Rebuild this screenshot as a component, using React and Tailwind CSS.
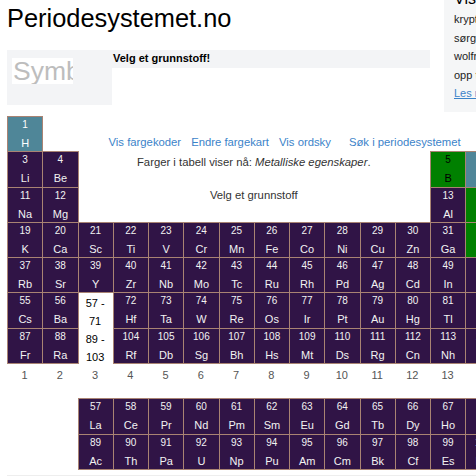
import { useState } from 'react'

// type: n = ikke-metall, g = halvmetall, m = metall
const elements = [
  [1, 'H', 1, 1, 'n'], [2, 'He', 18, 1, 'n'],
  [3, 'Li', 1, 2, 'm'], [4, 'Be', 2, 2, 'm'], [5, 'B', 13, 2, 'g'], [6, 'C', 14, 2, 'n'], [7, 'N', 15, 2, 'n'], [8, 'O', 16, 2, 'n'], [9, 'F', 17, 2, 'n'], [10, 'Ne', 18, 2, 'n'],
  [11, 'Na', 1, 3, 'm'], [12, 'Mg', 2, 3, 'm'], [13, 'Al', 13, 3, 'm'], [14, 'Si', 14, 3, 'g'], [15, 'P', 15, 3, 'n'], [16, 'S', 16, 3, 'n'], [17, 'Cl', 17, 3, 'n'], [18, 'Ar', 18, 3, 'n'],
  [19, 'K', 1, 4, 'm'], [20, 'Ca', 2, 4, 'm'], [21, 'Sc', 3, 4, 'm'], [22, 'Ti', 4, 4, 'm'], [23, 'V', 5, 4, 'm'], [24, 'Cr', 6, 4, 'm'], [25, 'Mn', 7, 4, 'm'], [26, 'Fe', 8, 4, 'm'], [27, 'Co', 9, 4, 'm'], [28, 'Ni', 10, 4, 'm'], [29, 'Cu', 11, 4, 'm'], [30, 'Zn', 12, 4, 'm'], [31, 'Ga', 13, 4, 'm'], [32, 'Ge', 14, 4, 'g'], [33, 'As', 15, 4, 'g'], [34, 'Se', 16, 4, 'n'], [35, 'Br', 17, 4, 'n'], [36, 'Kr', 18, 4, 'n'],
  [37, 'Rb', 1, 5, 'm'], [38, 'Sr', 2, 5, 'm'], [39, 'Y', 3, 5, 'm'], [40, 'Zr', 4, 5, 'm'], [41, 'Nb', 5, 5, 'm'], [42, 'Mo', 6, 5, 'm'], [43, 'Tc', 7, 5, 'm'], [44, 'Ru', 8, 5, 'm'], [45, 'Rh', 9, 5, 'm'], [46, 'Pd', 10, 5, 'm'], [47, 'Ag', 11, 5, 'm'], [48, 'Cd', 12, 5, 'm'], [49, 'In', 13, 5, 'm'], [50, 'Sn', 14, 5, 'm'], [51, 'Sb', 15, 5, 'g'], [52, 'Te', 16, 5, 'g'], [53, 'I', 17, 5, 'n'], [54, 'Xe', 18, 5, 'n'],
  [55, 'Cs', 1, 6, 'm'], [56, 'Ba', 2, 6, 'm'], [72, 'Hf', 4, 6, 'm'], [73, 'Ta', 5, 6, 'm'], [74, 'W', 6, 6, 'm'], [75, 'Re', 7, 6, 'm'], [76, 'Os', 8, 6, 'm'], [77, 'Ir', 9, 6, 'm'], [78, 'Pt', 10, 6, 'm'], [79, 'Au', 11, 6, 'm'], [80, 'Hg', 12, 6, 'm'], [81, 'Tl', 13, 6, 'm'], [82, 'Pb', 14, 6, 'm'], [83, 'Bi', 15, 6, 'm'], [84, 'Po', 16, 6, 'm'], [85, 'At', 17, 6, 'g'], [86, 'Rn', 18, 6, 'n'],
  [87, 'Fr', 1, 7, 'm'], [88, 'Ra', 2, 7, 'm'], [104, 'Rf', 4, 7, 'm'], [105, 'Db', 5, 7, 'm'], [106, 'Sg', 6, 7, 'm'], [107, 'Bh', 7, 7, 'm'], [108, 'Hs', 8, 7, 'm'], [109, 'Mt', 9, 7, 'm'], [110, 'Ds', 10, 7, 'm'], [111, 'Rg', 11, 7, 'm'], [112, 'Cn', 12, 7, 'm'], [113, 'Nh', 13, 7, 'm'], [114, 'Fl', 14, 7, 'm'], [115, 'Mc', 15, 7, 'm'], [116, 'Lv', 16, 7, 'm'], [117, 'Ts', 17, 7, 'm'], [118, 'Og', 18, 7, 'n'],
]

const lanthanides = ['La', 'Ce', 'Pr', 'Nd', 'Pm', 'Sm', 'Eu', 'Gd', 'Tb', 'Dy', 'Ho', 'Er', 'Tm', 'Yb', 'Lu']
const actinides = ['Ac', 'Th', 'Pa', 'U', 'Np', 'Pu', 'Am', 'Cm', 'Bk', 'Cf', 'Es', 'Fm', 'Md', 'No', 'Lr']

const colStart = ['', 'col-start-1', 'col-start-2', 'col-start-3', 'col-start-4', 'col-start-5', 'col-start-6', 'col-start-7', 'col-start-8', 'col-start-9', 'col-start-10', 'col-start-11', 'col-start-12', 'col-start-13', 'col-start-14', 'col-start-15', 'col-start-16', 'col-start-17', 'col-start-18']
const rowStart = ['', 'row-start-1', 'row-start-2', 'row-start-3', 'row-start-4', 'row-start-5', 'row-start-6', 'row-start-7']

const typeClass = {
  n: 'bg-[#4f8698] text-white',
  g: 'bg-[#008000] text-black',
  m: 'bg-[#301446] text-[#f2f2f2]',
}

const Cell = ({ n, s, t, col, row, onPick }) => (
  <button
    onClick={() => onPick(s)}
    className={`${typeClass[t]} ${colStart[col]} ${rowStart[row]} -mr-px -mb-px border border-[#a98373] flex flex-col items-center pt-[2px] gap-[6px] cursor-pointer`}
  >
    <span className="text-[10px] leading-[12px]">{n}</span>
    <span className="text-[11px] leading-[12px]">{s}</span>
  </button>
)

const App = () => {
  const [picked, setPicked] = useState(null)

  return (
    <div className="w-[476px] h-[476px] overflow-hidden bg-white font-['Liberation_Sans',Arial,sans-serif] text-[#222]">
      {/* Topp */}
      <div className="flex h-[112px]">
        <div className="w-[444px] shrink-0 pl-[7px]">
          <h1 className="text-[25.4px] leading-[29px] pt-[4px] text-black">Periodesystemet.no</h1>
          <div className="flex mt-[17px]">
            <div className="w-[105px] h-[55px] bg-[#f3f4f6] pl-[5px] pt-[8px]">
              <input
                placeholder="Symbol"
                className="w-[61px] h-[26px] bg-white pl-[1px] text-[26.5px] leading-[26px] outline-none placeholder:text-[#bdbdbd] font-['Liberation_Sans',Arial,sans-serif]"
              />
            </div>
            <div className="w-[318px] h-[18px] bg-[#f3f4f6] pl-[1px] pt-[2px] text-[11px] leading-[13px] font-bold text-black">
              {picked ? picked : 'Velg et grunnstoff!'}
            </div>
          </div>
        </div>
        <div className="w-[220px] shrink-0 h-[112px] bg-[#f5f6f7] pl-[10px] whitespace-nowrap">
          <h3 className="text-[16px] leading-[18px] -mt-[10px] text-black">Visste du at...</h3>
          <div className="text-[11px] leading-[18.5px] text-[#222] pt-[2px]">
            <p>krypton er en edelgass</p>
            <p>sørger for lys i lamper?</p>
            <p>wolfram har høyest smeltepunkt</p>
            <p>opp til 3422 °C?</p>
            <a href="#" className="text-[#3b83c9] underline">Les mer</a>
          </div>
        </div>
      </div>

      {/* Tabell */}
      <div className="mt-[4px] pl-[7px]">
        <div className="grid grid-cols-[repeat(18,35.25px)] grid-rows-[repeat(7,35.25px)] w-max">
          {elements.map(([n, s, col, row, t]) => (
            <Cell key={n} n={n} s={s} t={t} col={col} row={row} onPick={setPicked} />
          ))}
          <div className="col-start-3 row-start-1 col-span-16 flex pl-[31px] pt-[19px] gap-[10px] text-[11.3px] leading-[14px] text-[#3b83c9] whitespace-nowrap">
            <a href="#">Vis fargekoder</a>
            <a href="#">Endre fargekart</a>
            <a href="#" className="mr-[8px]">Vis ordsky</a>
            <a href="#">Søk i periodesystemet</a>
          </div>
          <div className="col-start-3 row-start-2 col-span-10 row-span-2 text-center text-[11.3px] leading-[14px] text-[#333] pt-[4px]">
            <p>Farger i tabell viser nå: <i>Metalliske egenskaper</i>.</p>
            <p className="mt-[19px]">Velg et grunnstoff</p>
          </div>
          <div className="col-start-3 row-start-6 flex flex-col items-center pt-[5px] gap-[6px] text-[11px] leading-[12px] text-black">
            <span>57 -</span>
            <span>71</span>
          </div>
          <div className="col-start-3 row-start-7 flex flex-col items-center pt-[5px] gap-[6px] text-[11px] leading-[12px] text-black">
            <span>89 -</span>
            <span>103</span>
          </div>
        </div>

        <div className="flex w-max">
          {Array.from({ length: 18 }, (_, i) => (
            <div key={i} className="w-[35.25px] h-[24px] flex items-center justify-center text-[11px] text-[#555]">
              {i + 1}
            </div>
          ))}
        </div>

        <div className="grid grid-cols-[repeat(18,35.25px)] grid-rows-[repeat(2,35.25px)] w-max mt-[11.5px]">
          {lanthanides.map((s, i) => (
            <Cell key={s} n={57 + i} s={s} t="m" col={3 + i} row={1} onPick={setPicked} />
          ))}
          {actinides.map((s, i) => (
            <Cell key={s} n={89 + i} s={s} t="m" col={3 + i} row={2} onPick={setPicked} />
          ))}
        </div>
        <div className="mt-[6px] border-t border-[#eeeeee] w-[600px]"></div>
      </div>
    </div>
  )
}

export default App
